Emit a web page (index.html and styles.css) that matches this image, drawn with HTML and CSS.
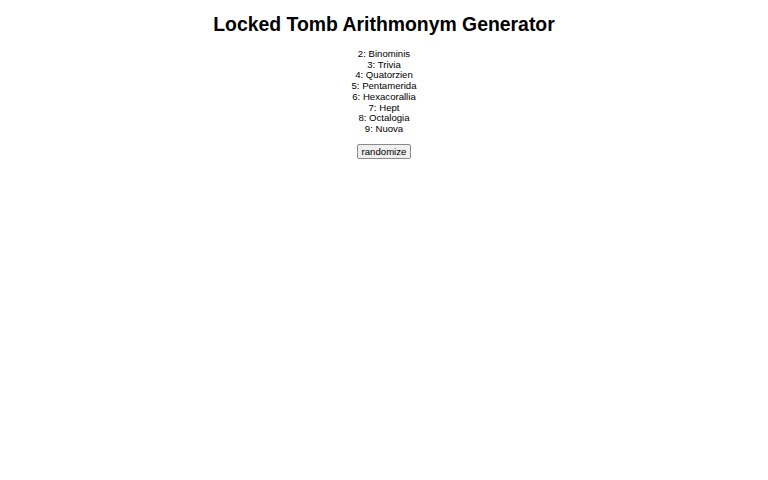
FILE: index.html
```html
<!DOCTYPE html>
<html>
    <head>
        <meta charset="utf-8">
        <title>Locked Tomb Arithmonym Generator</title>
        <link rel="stylesheet" href="styles.css">
    </head>
    <body>
        <h1>Locked Tomb Arithmonym Generator</h1>

        <ul id="names">
            <li>2: Binominis</li>
            <li>3: Trivia</li>
            <li>4: Quatorzien</li>
            <li>5: Pentamerida</li>
            <li>6: Hexacorallia</li>
            <li>7: Hept</li>
            <li>8: Octalogia</li>
            <li>9: Nuova</li>
        </ul>

        <button id="randomize">randomize</button>
    </body>
</html>
```

FILE: styles.css
```css
body {
    margin: 8px;
    font-family: "Liberation Sans", Arial, sans-serif;
    text-align: center;
    color: #000;
    background: #fff;
}

h1 {
    font-size: 19.4px;
    margin: 5px 0 13px 0;
}

#names {
    list-style: none;
    margin: 0 0 6px 0;
    padding: 0;
    font-size: 9.6px;
    line-height: 10.7px;
}

#randomize {
    font-family: "Liberation Sans", Arial, sans-serif;
    font-size: 9.6px;
    padding: 1px 4px;
    border: 1px solid #8a8a8a;
    border-radius: 2px;
    background: #efefef;
}
```
